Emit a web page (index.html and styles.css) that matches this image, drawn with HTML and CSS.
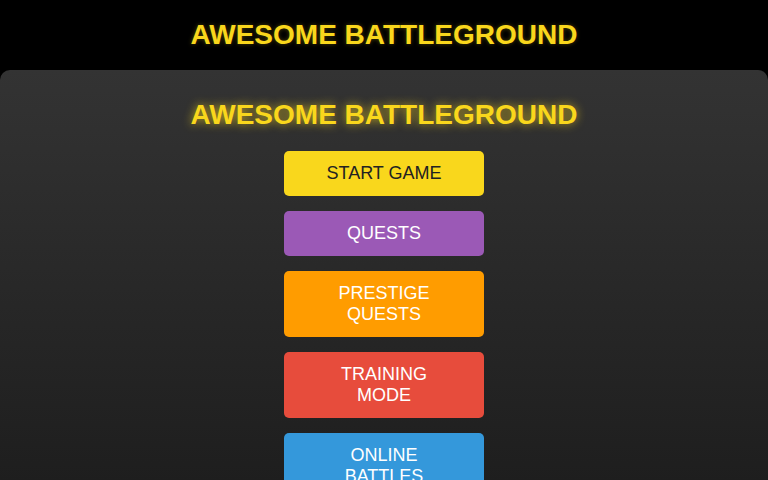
FILE: index.html
```html
<!DOCTYPE html>
<html lang="en">
<head>
    <meta charset="UTF-8">
    <meta name="viewport" content="width=device-width, initial-scale=1.0">
    <title>Awesome Battleground</title>
    <link rel="stylesheet" href="styles.css">
</head>
<body>
    <header class="top-bar">
        <h1 class="title">AWESOME BATTLEGROUND</h1>
    </header>

    <!-- Main menu -->
    <div class="menu-panel">
        <h1 class="title glow">AWESOME BATTLEGROUND</h1>
        <div class="menu-buttons">
            <button class="menu-btn start">START GAME</button>
            <button class="menu-btn quests">QUESTS</button>
            <button class="menu-btn prestige">PRESTIGE QUESTS</button>
            <button class="menu-btn training">TRAINING MODE</button>
            <button class="menu-btn online">ONLINE BATTLES</button>
        </div>
    </div>
</body>
</html>
```

FILE: styles.css
```css
body {
    font-family: "Liberation Sans", Arial, sans-serif;
    background: #000;
    color: #fff;
    margin: 0;
    min-height: 100vh;
}
.top-bar {
    text-align: center;
}
.title {
    color: #f9d71c;
    font-size: 28px;
    font-weight: bold;
    margin: 0;
    line-height: 32px;
    text-shadow: 0 0 4px rgba(249, 215, 28, 0.3);
}
.top-bar .title {
    padding: 19px 0 19px;
}
.menu-panel {
    background: linear-gradient(to bottom, #333, #111);
    border-radius: 10px;
    padding: 29px 0 40px;
    text-align: center;
    min-height: 600px;
}
.title.glow {
    text-shadow: 0 0 10px rgba(249, 215, 28, 0.75);
}
.menu-buttons {
    display: flex;
    flex-direction: column;
    align-items: center;
    gap: 15px;
    margin-top: 20px;
}
.menu-btn {
    width: 200px;
    padding: 12px 40px;
    border: none;
    border-radius: 5px;
    font-family: inherit;
    font-size: 18px;
    line-height: 21px;
    color: #fff;
    cursor: pointer;
}
.menu-btn.start {
    background-color: #f9d71c;
    color: #222;
}
.menu-btn.quests {
    background-color: #9b59b6;
}
.menu-btn.prestige {
    background-color: #ff9c00;
}
.menu-btn.training {
    background-color: #e74c3c;
}
.menu-btn.online {
    background-color: #3498db;
}
```
